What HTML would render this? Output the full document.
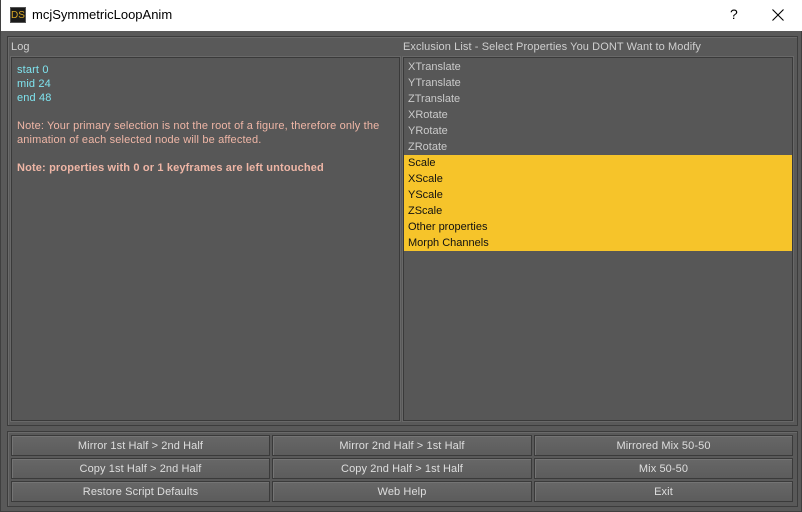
<!DOCTYPE html>
<html><head><style>
*{margin:0;padding:0;box-sizing:border-box}
body{width:802px;height:512px;overflow:hidden;background:#595959;font-family:"Liberation Sans",Arial,sans-serif;font-size:11px;position:relative;border:1px solid #3f3f3f;border-top:none}
.title{position:absolute;left:0;top:0;width:802px;height:31px;background:#fff;color:#000;font-size:13px}
.logo{position:absolute;left:9px;top:7px;width:16px;height:16px;background:#1a1a1a;color:#d6a526;font-size:10px;line-height:16px;text-align:center;border:1px solid #555}
.ttext{position:absolute;left:31px;top:7px}
.q{position:absolute;left:729px;top:6px;font-size:14px}
.x{position:absolute;left:771px;top:9px}
.panel{position:absolute;border:1px solid #3c3c3c;box-shadow:inset 1px 1px 0 #6a6a6a}
.box{position:absolute;background:#575757;border:1px solid #3a3a3a;box-shadow:0 0 0 1px #686868}
.lbl{position:absolute;color:#cfcfcf;letter-spacing:0.1px}
.log{padding:5px 5px;line-height:14px;letter-spacing:0.15px}
.c{color:#7fe3ee}.n{color:#efb6a6}
.item{height:16px;line-height:16px;padding-left:4px;color:#cacaca}
.sel{background:#f6c42a;color:#111}
.btn{position:absolute;height:21px;background:linear-gradient(#676767,#5c5c5c);border:1px solid #3a3a3a;box-shadow:inset 1px 1px 0 #747474;color:#dedede;text-align:center;line-height:20px;letter-spacing:0.1px}
</style></head><body>
<div class="title"><div class="logo">DS</div><div class="ttext">mcjSymmetricLoopAnim</div><div class="q">?</div>
<svg class="x" width="12" height="12" viewBox="0 0 12 12"><path d="M0.5 0.5L11.5 11.5M11.5 0.5L0.5 11.5" stroke="#000" stroke-width="1.1"/></svg></div>
<div class="panel" style="left:6px;top:36px;width:791px;height:390px"></div>
<div class="lbl" style="left:10px;top:41px">Log</div>
<div class="lbl" style="left:402px;top:41px">Exclusion List - Select Properties You DONT Want to Modify</div>
<div class="box log" style="left:10px;top:57px;width:389px;height:364px">
<div class="c">start 0</div><div class="c">mid 24</div><div class="c">end 48</div><br>
<div class="n">Note: Your primary selection is not the root of a figure, therefore only the<br>animation of each selected node will be affected.</div><br>
<div class="n" style="font-weight:bold">Note: properties with 0 or 1 keyframes are left untouched</div>
</div>
<div class="box" style="left:402px;top:57px;width:390px;height:364px;padding-top:1px">
<div class="item">XTranslate</div><div class="item">YTranslate</div><div class="item">ZTranslate</div><div class="item">XRotate</div><div class="item">YRotate</div><div class="item">ZRotate</div>
<div class="item sel">Scale</div><div class="item sel">XScale</div><div class="item sel">YScale</div><div class="item sel">ZScale</div><div class="item sel">Other properties</div><div class="item sel">Morph Channels</div>
</div>
<div class="panel" style="left:6px;top:431px;width:791px;height:76px"></div>
<div class="btn" style="left:10px;top:435px;width:259px">Mirror 1st Half &gt; 2nd Half</div>
<div class="btn" style="left:271px;top:435px;width:260px">Mirror 2nd Half &gt; 1st Half</div>
<div class="btn" style="left:533px;top:435px;width:259px">Mirrored Mix 50-50</div>
<div class="btn" style="left:10px;top:458px;width:259px">Copy 1st Half &gt; 2nd Half</div>
<div class="btn" style="left:271px;top:458px;width:260px">Copy 2nd Half &gt; 1st Half</div>
<div class="btn" style="left:533px;top:458px;width:259px">Mix 50-50</div>
<div class="btn" style="left:10px;top:481px;width:259px">Restore Script Defaults</div>
<div class="btn" style="left:271px;top:481px;width:260px">Web Help</div>
<div class="btn" style="left:533px;top:481px;width:259px">Exit</div>
</body></html>
